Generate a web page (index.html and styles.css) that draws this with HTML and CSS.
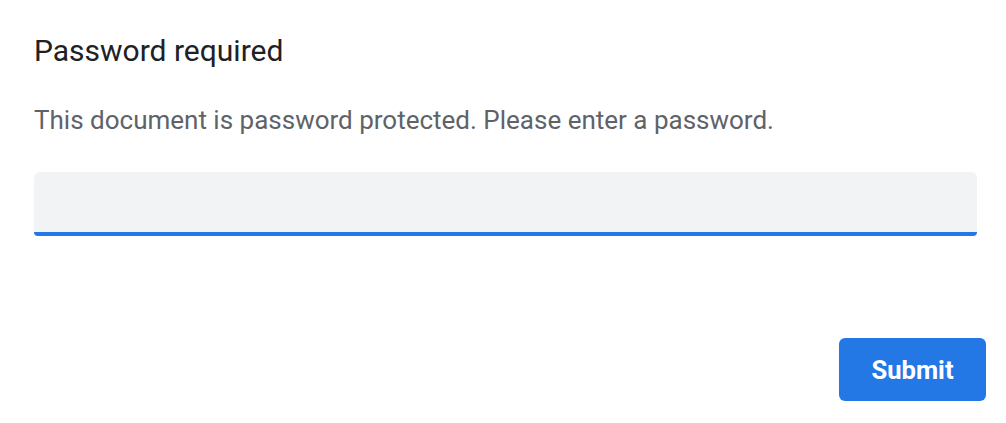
FILE: index.html
```html
<!DOCTYPE html>
<html>
<head>
<meta charset="utf-8">
<link rel="stylesheet" href="styles.css">
</head>
<body>
<div class="dialog">
  <div class="content">
    <h1 class="title">Password required</h1>
    <p class="message">This document is password protected. Please enter a password.</p>
    <div class="field"><input class="input" type="password" aria-label="Password"></div>
  </div>
  <div class="actions">
    <button class="submit">Submit</button>
  </div>
</div>
</body>
</html>
```
FILE: styles.css
```css
html, body {
  margin: 0;
  padding: 0;
  background: #ffffff;
}
body {
  font-family: Roboto, "Liberation Sans", sans-serif;
  width: 1006px;
  height: 423px;
  overflow: hidden;
}
.dialog {
  display: flex;
  flex-direction: column;
}
.content {
  padding: 0 29px 0 34px;
}
.title {
  margin: 0;
  padding-top: 33px;
  font-size: 30px;
  line-height: 36px;
  font-weight: 400;
  color: #202124;
}
.message {
  margin: 0;
  padding-top: 36px;
  font-size: 26px;
  line-height: 30px;
  color: #5f6368;
}
.field {
  margin-top: 37px;
}
.input {
  display: block;
  box-sizing: border-box;
  width: 100%;
  height: 64px;
  border: none;
  border-bottom: 4px solid #2478e6;
  border-radius: 6px 6px 4px 4px;
  background: #f1f3f4;
  outline: none;
  padding: 0 16px;
  font-size: 26px;
}
.actions {
  display: flex;
  justify-content: flex-end;
  padding: 102px 20px 0 0;
}
.submit {
  width: 147px;
  height: 63px;
  border: none;
  border-radius: 6px;
  background: #2478e6;
  color: #ffffff;
  font-family: Roboto, "Liberation Sans", sans-serif;
  font-size: 25.6px;
  font-weight: 700;
  padding: 0;
}
```
